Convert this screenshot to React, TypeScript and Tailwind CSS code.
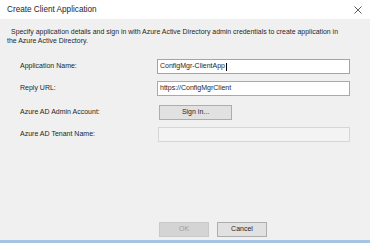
import React from "react";

export default function App() {
  return (
    <div
      className="w-[370px] h-[243px] flex flex-col bg-[#f0f0f0] text-[#262626] overflow-hidden"
      style={{ fontFamily: '"Liberation Sans", Arial, sans-serif' }}
    >
      <div className="h-[19px] bg-white flex items-center justify-between pl-[7px] pr-[8px] shrink-0">
        <span className="text-[8.2px] leading-none mt-[1px]">Create Client Application</span>
        <svg width="8" height="8" viewBox="0 0 8 8" className="mt-[1px]">
          <path d="M0.5 0.5 L7.5 7.5 M7.5 0.5 L0.5 7.5" stroke="#333" strokeWidth="0.8" fill="none" />
        </svg>
      </div>
      <div className="flex-1 flex flex-col">
        <div className="pt-[8px] px-[7px] text-[6.95px] leading-[9px] whitespace-nowrap">
          <div className="pl-[4px]">
            Specify application details and sign in with Azure Active Directory admin credentials to create application in
          </div>
          <div>the Azure Active Directory.</div>
        </div>
        <div className="mt-[14px] grid grid-cols-[137px_193px] pl-[20px] gap-y-[7px] text-[7px] items-center">
          <div>Application Name:</div>
          <div className="h-[15px] border border-[#78aee5] bg-white flex items-center px-[2px]">
            ConfigMgr-ClientApp<span className="inline-block w-[0.5px] h-[8px] bg-black ml-[1px]" />
          </div>
          <div>Reply URL:</div>
          <div className="h-[15px] border border-[#a9a9a9] bg-white flex items-center px-[2px]">
            https://ConfigMgrClient
          </div>
          <div className="pt-[2px]">Azure AD Admin Account:</div>
          <div className="pl-[2px] pt-[2px]">
            <div className="w-[73px] h-[15px] border border-[#adadad] bg-[#e1e1e1] flex items-center justify-center">
              Sign in...
            </div>
          </div>
          <div>Azure AD Tenant Name:</div>
          <div className="pl-[1px]">
            <div className="h-[15px] border border-[#d6d6d6] bg-[#f3f3f3]" />
          </div>
        </div>
        <div className="flex-1" />
        <div className="flex gap-[8px] pl-[159px] pb-[3px] text-[7px]">
          <div className="w-[50px] h-[15px] border border-[#c8c8c8] bg-[#d4d4d4] text-[#a0a0a0] flex items-center justify-center">
            OK
          </div>
          <div className="w-[50px] h-[15px] border border-[#adadad] bg-[#e1e1e1] flex items-center justify-center">
            Cancel
          </div>
        </div>
      </div>
      <div className="h-[3px] bg-[#a5c6e3] shrink-0" />
    </div>
  );
}
